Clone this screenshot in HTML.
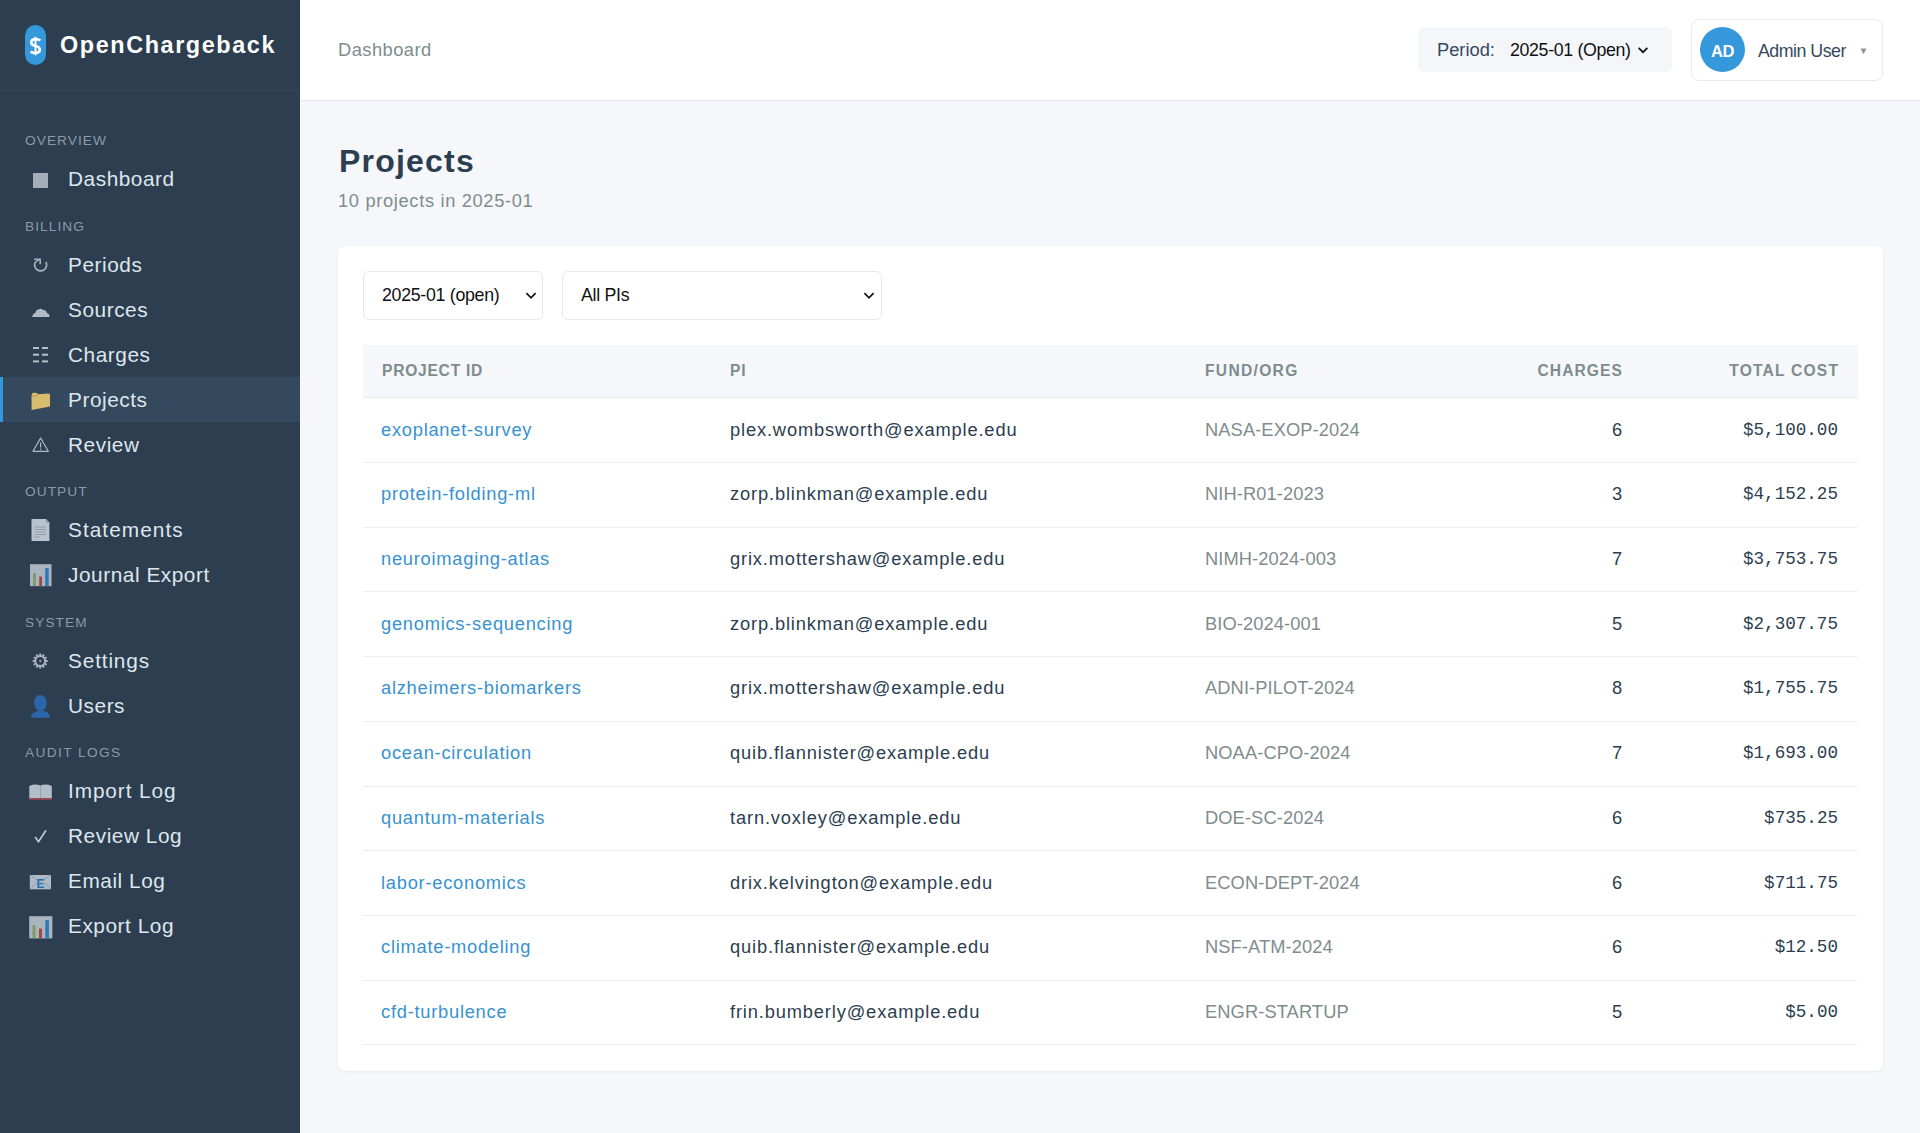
<!DOCTYPE html>
<html><head><meta charset="utf-8">
<style>
*{box-sizing:border-box;margin:0;padding:0}
html,body{width:1920px;height:1133px;overflow:hidden;background:#f5f7fa;font-family:"Liberation Sans",sans-serif}
.abs{position:absolute;white-space:nowrap}
#sb{position:absolute;left:0;top:0;width:300px;height:1133px;background:#2c3e50}
#sbh{position:absolute;left:0;top:0;width:300px;height:91px;border-bottom:1px solid #34495e}
.pill{position:absolute;left:25px;top:25px;width:21px;height:40px;border-radius:10.5px;background:#3498db}
.logo{left:60px;font-weight:bold;color:#fff;font-size:23.4px;letter-spacing:1.6px;line-height:30px;top:30px}
.sect{left:25px;font-size:13.7px;letter-spacing:1.06px;color:#8d9aa6;line-height:16px}
.nav{left:68px;font-size:20.8px;letter-spacing:0.55px;color:#dfe6ec;line-height:24px}
.band{position:absolute;left:0;width:300px;height:45px;background:#34495e;border-left:3px solid #3498db}
#hd{position:absolute;left:300px;top:0;width:1620px;height:101px;background:#fff;border-bottom:1px solid #e6e9ed}
.crumb{left:338px;font-size:18.3px;letter-spacing:0.46px;color:#7f8c8d;line-height:20px}
.pbox{position:absolute;left:1418px;top:27px;width:254px;height:45px;background:#f5f6fa;border-radius:6px}
.ubox{position:absolute;left:1691px;top:19px;width:192px;height:62px;border:1px solid #e8ebee;border-radius:8px;background:#fff}
.av{position:absolute;left:1700px;top:27px;width:45px;height:45px;border-radius:50%;background:#3498db}
.title{left:339px;font-weight:bold;font-size:32px;letter-spacing:1.2px;color:#2c3e50;line-height:36px}
.sub{left:338px;font-size:18.3px;letter-spacing:0.66px;color:#7f8c8d;line-height:20px}
#card{position:absolute;left:338px;top:246px;width:1545px;height:825px;background:#fff;border-radius:8px;box-shadow:0 1px 3px rgba(0,0,0,0.06)}
.sel{position:absolute;top:271px;height:49px;border:1px solid #e6e9ec;border-radius:6px;background:#fff}
.th{position:absolute;left:363px;top:345px;width:1495px;height:53px;background:#f5f7fa;border-bottom:1px solid #e8ecef}
.thx{font-weight:bold;font-size:15.6px;letter-spacing:0.75px;color:#7f8c8d;line-height:16px}
.row{position:absolute;left:363px;width:1495px;border-bottom:1px solid #edf0f2}
.c{font-size:18.3px;line-height:20px;letter-spacing:0.75px}
.lk{color:#3792d0}
.pi{color:#2c3e50;letter-spacing:0.85px}
.fo{color:#7f8c8d;letter-spacing:0.1px}
.ch{color:#2c3e50}
.mo{font-family:"Liberation Mono",monospace;font-size:17.6px;color:#2c3e50;line-height:20px}
.ptxt{font-size:18.3px;color:#34495e;line-height:22px}
.popen{font-size:17.8px;letter-spacing:-0.35px;color:#111;line-height:22px}
.adtxt{font-size:16.5px;font-weight:bold;color:#fff;line-height:22px;letter-spacing:-0.4px}
.admin{font-size:17.8px;letter-spacing:-0.5px;color:#34495e;line-height:22px}
.seltxt{font-size:17.8px;letter-spacing:-0.3px;color:#111;line-height:22px}
.rb{position:absolute;left:363px;width:1495px;height:1px;background:#eceff1}
</style></head><body>
<div id="sb">
  <div id="sbh"></div>
</div>
<div class="pill"></div>
<div class="abs logo">OpenChargeback</div>

<div class="band" style="top:377px"></div>
<div class="abs sect" style="top:133.05px">OVERVIEW</div>
<div class="abs sect" style="top:218.50px">BILLING</div>
<div class="abs sect" style="top:484.00px">OUTPUT</div>
<div class="abs sect" style="top:614.50px">SYSTEM</div>
<div class="abs sect" style="top:745.00px;letter-spacing:1.4px">AUDIT LOGS</div>
<div class="abs nav" style="top:167.05px">Dashboard</div>
<div class="abs nav" style="top:252.55px">Periods</div>
<div class="abs nav" style="top:297.55px">Sources</div>
<div class="abs nav" style="top:342.55px">Charges</div>
<div class="abs nav act" style="top:387.55px">Projects</div>
<div class="abs nav" style="top:432.55px">Review</div>
<div class="abs nav" style="top:518.05px;letter-spacing:1.05px">Statements</div>
<div class="abs nav" style="top:563.05px">Journal Export</div>
<div class="abs nav" style="top:648.55px;letter-spacing:0.85px">Settings</div>
<div class="abs nav" style="top:693.55px">Users</div>
<div class="abs nav" style="top:779.05px;letter-spacing:0.9px">Import Log</div>
<div class="abs nav" style="top:824.05px">Review Log</div>
<div class="abs nav" style="top:869.05px">Email Log</div>
<div class="abs nav" style="top:914.05px">Export Log</div>

<svg class="abs" style="left:0;top:0" width="60" height="1133" viewBox="0 0 60 1133">
 <!-- dashboard square -->
 <rect x="33" y="173" width="15" height="15" fill="#a4adb8"/>
 <!-- periods arrow -->
 <path d="M35.3 262.2 A6 6 0 1 0 45.9 262" fill="none" stroke="#a9b3bd" stroke-width="1.6"/>
 <path d="M35.3 262.2 L39.8 259.2 M34.2 259.2 L40.2 259.2 L40.2 264.2" fill="none" stroke="#a9b3bd" stroke-width="1.5"/>
 <!-- cloud -->
 <path d="M32 317 L49.5 317 Q49.6 313.6 46.8 313 Q46.4 309.6 43 309.9 Q41.2 308 38.6 309.4 Q35.8 309.6 35.6 312.6 Q33 313.6 32 317 Z" fill="#b1bbc5"/>
 <!-- charges -->
 <g fill="#b7c0c9">
  <rect x="33" y="347" width="6" height="2"/><rect x="42" y="347" width="6" height="2"/>
  <rect x="33" y="353.7" width="6" height="2"/><rect x="42" y="353.7" width="6" height="2"/>
  <rect x="33" y="360.4" width="6" height="2"/><rect x="42" y="360.4" width="6" height="2"/>
 </g>
 <!-- folder -->
 <path d="M31.5 396 L32 394 Q32.5 392.6 34 392.8 L37 393 L38 394.2 L48.5 393.5 Q50 393.4 50 395 L50 406.5 L31.6 410 Z" fill="#d8bd6c"/>
 <path d="M32 395.5 L38 394.8 L38 396.3 L32 397 Z" fill="#c9a353"/>
 <!-- warning -->
 <path d="M40.6 438 L48.3 451.3 L33 451.3 Z" fill="none" stroke="#b1bbc5" stroke-width="1.2" stroke-linejoin="round"/>
 <rect x="40" y="442.5" width="1.2" height="5" fill="#b1bbc5"/><rect x="40" y="448.6" width="1.2" height="1.3" fill="#b1bbc5"/>
 <!-- statements doc -->
 <path d="M31.5 519 L46 519 L49.4 522.5 L49.4 541 L31.5 541 Z" fill="#b9c3cd"/>
 <path d="M46 519 L49.4 522.5 L46 522.5 Z" fill="#6d9bc3"/>
 <g stroke="#8a96a3" stroke-width="0.8"><line x1="34.5" y1="527" x2="46" y2="527"/><line x1="34.5" y1="529.5" x2="46" y2="529.5"/><line x1="34.5" y1="532" x2="46" y2="532"/><line x1="34.5" y1="534.5" x2="46" y2="534.5"/><line x1="34.5" y1="537" x2="40" y2="537"/></g>
 <!-- journal chart -->
 <rect x="30" y="564.2" width="21.5" height="22" fill="#aab4be"/>
 <rect x="33" y="573" width="2.9" height="13" fill="#7f9a6c"/>
 <rect x="39.2" y="576.6" width="2.8" height="9.4" fill="#a4483f"/>
 <rect x="45.2" y="568" width="3.5" height="18" fill="#2f79b8"/>
 <!-- gear -->
 <g transform="translate(40.2 661)">
  <circle r="4.9" fill="none" stroke="#a9b4c0" stroke-width="2"/>
  <g fill="#a9b4c0"><rect x="-1" y="-7.5" width="2" height="3" transform="rotate(0)"/><rect x="-1" y="-7.5" width="2" height="3" transform="rotate(30)"/><rect x="-1" y="-7.5" width="2" height="3" transform="rotate(60)"/><rect x="-1" y="-7.5" width="2" height="3" transform="rotate(90)"/><rect x="-1" y="-7.5" width="2" height="3" transform="rotate(120)"/><rect x="-1" y="-7.5" width="2" height="3" transform="rotate(150)"/><rect x="-1" y="-7.5" width="2" height="3" transform="rotate(180)"/><rect x="-1" y="-7.5" width="2" height="3" transform="rotate(210)"/><rect x="-1" y="-7.5" width="2" height="3" transform="rotate(240)"/><rect x="-1" y="-7.5" width="2" height="3" transform="rotate(270)"/><rect x="-1" y="-7.5" width="2" height="3" transform="rotate(300)"/><rect x="-1" y="-7.5" width="2" height="3" transform="rotate(330)"/><circle r="1.1"/></g>
 </g>
 <!-- user -->
 <ellipse cx="40.4" cy="703" rx="6.3" ry="8" fill="#2c66a8"/>
 <path d="M31 717.7 Q31.5 711 40.4 710.5 Q49.5 711 50 717.7 Z" fill="#2c66a8"/>
 <!-- book -->
 <path d="M29.3 786 Q35 783.5 40.5 785.5 Q46 783.5 51.8 786 L51.8 798.5 L29.3 798.5 Z" fill="#b3bdc7"/>
 <rect x="29.3" y="798" width="22.5" height="1.8" fill="#9a4a55"/>
 <line x1="40.5" y1="785.5" x2="40.5" y2="798" stroke="#8f9aa6" stroke-width="0.8"/>
 <!-- check -->
 <path d="M35.5 837.5 L38.5 841.8 L45.7 830.8" fill="none" stroke="#c3ccd4" stroke-width="1.6" stroke-linecap="round" stroke-linejoin="round"/>
 <!-- envelope -->
 <rect x="29.8" y="875" width="21.2" height="14.3" fill="#aebac6"/>
 <path d="M29.8 875 L40.4 882 L51 875 M29.8 889.3 L37 882 M51 889.3 L44 882" fill="none" stroke="#7f96ad" stroke-width="0.7"/>
 <text x="40.4" y="887.6" font-family="Liberation Sans" font-weight="bold" font-size="12" fill="#2c6fb0" text-anchor="middle">E</text>
 <!-- export chart -->
 <rect x="29.2" y="916.2" width="23.2" height="22.2" fill="#aab4be"/>
 <rect x="32.5" y="925" width="3" height="13.4" fill="#7f9a6c"/>
 <rect x="39" y="928.6" width="3" height="9.8" fill="#a4483f"/>
 <rect x="45.3" y="920" width="3.6" height="18.4" fill="#2f79b8"/>
</svg>
<svg class="abs" style="left:25px;top:25px" width="21" height="40" viewBox="0 0 21 40"><path d="M15.4 15.4 Q13.4 14.1 10.6 14.1 Q6.3 14.1 6.3 17.6 Q6.3 20.2 10.5 21 Q14.8 21.8 14.8 24.6 Q14.8 28 10.4 28 Q7.4 28 5.6 26.6" fill="none" stroke="#fff" stroke-width="2.7"/><path d="M10.5 11.8 V30.2" stroke="#fff" stroke-width="2"/></svg>

<div id="hd"></div>
<div class="abs crumb" style="top:40px">Dashboard</div>
<div class="pbox"></div>
<div class="ubox"></div>
<div class="av"></div>
<div class="abs ptxt" style="left:1437px;top:39px">Period:</div>
<div class="abs popen" style="left:1510px;top:39px">2025-01 (Open)</div>
<svg class="abs" style="left:1636px;top:45px" width="14" height="12" viewBox="0 0 14 12"><path d="M2.6 2.8 L7 7.2 L11.4 2.8" fill="none" stroke="#111" stroke-width="1.7"/></svg>
<div class="abs adtxt" style="left:1700px;top:40px;width:45px;text-align:center">AD</div>
<div class="abs admin" style="left:1758px;top:40px">Admin User</div>
<svg class="abs" style="left:1859px;top:47px" width="9" height="9" viewBox="0 0 9 9"><path d="M1.5 1.5 L7.5 1.5 L4.5 7.2 Z" fill="#8a9699"/></svg>


<div class="abs title" style="top:143px">Projects</div>
<div class="abs sub" style="top:191px">10 projects in 2025-01</div>
<div id="card"></div>
<div class="sel" style="left:363px;width:180px"></div>
<div class="sel" style="left:562px;width:320px"></div>
<div class="th"></div>
<div class="abs seltxt" style="left:382px;top:284px">2025-01 (open)</div>
<svg class="abs" style="left:524px;top:290px" width="14" height="12" viewBox="0 0 14 12"><path d="M2.4 3.2 L7 7.8 L11.6 3.2" fill="none" stroke="#111" stroke-width="1.7"/></svg>
<div class="abs seltxt" style="left:581px;top:284px">All PIs</div>
<svg class="abs" style="left:862px;top:290px" width="14" height="12" viewBox="0 0 14 12"><path d="M2.4 3.2 L7 7.8 L11.6 3.2" fill="none" stroke="#111" stroke-width="1.7"/></svg>
<div class="abs thx" style="left:382px;top:362.75px">PROJECT ID</div>
<div class="abs thx" style="left:730px;top:362.75px">PI</div>
<div class="abs thx" style="left:1205px;top:362.75px;letter-spacing:1.3px">FUND/ORG</div>
<div class="abs thx" style="right:298px;top:362.75px;margin-right:-1.1px;letter-spacing:1.1px">CHARGES</div>
<div class="abs thx" style="right:82px;top:362.75px;margin-right:-1.2px;letter-spacing:1.2px">TOTAL COST</div>
<div class="rb" style="top:462.00px"></div>
<div class="abs c lk" style="left:381px;top:419.60px">exoplanet-survey</div>
<div class="abs c pi" style="left:730px;top:419.60px">plex.wombsworth@example.edu</div>
<div class="abs c fo" style="left:1205px;top:419.60px">NASA-EXOP-2024</div>
<div class="abs c ch" style="right:297px;top:419.60px">6</div>
<div class="abs mo" style="right:82px;top:419.60px">$5,100.00</div>
<div class="rb" style="top:526.72px"></div>
<div class="abs c lk" style="left:381px;top:484.32px">protein-folding-ml</div>
<div class="abs c pi" style="left:730px;top:484.32px">zorp.blinkman@example.edu</div>
<div class="abs c fo" style="left:1205px;top:484.32px">NIH-R01-2023</div>
<div class="abs c ch" style="right:297px;top:484.32px">3</div>
<div class="abs mo" style="right:82px;top:484.32px">$4,152.25</div>
<div class="rb" style="top:591.44px"></div>
<div class="abs c lk" style="left:381px;top:549.04px">neuroimaging-atlas</div>
<div class="abs c pi" style="left:730px;top:549.04px">grix.mottershaw@example.edu</div>
<div class="abs c fo" style="left:1205px;top:549.04px">NIMH-2024-003</div>
<div class="abs c ch" style="right:297px;top:549.04px">7</div>
<div class="abs mo" style="right:82px;top:549.04px">$3,753.75</div>
<div class="rb" style="top:656.16px"></div>
<div class="abs c lk" style="left:381px;top:613.76px">genomics-sequencing</div>
<div class="abs c pi" style="left:730px;top:613.76px">zorp.blinkman@example.edu</div>
<div class="abs c fo" style="left:1205px;top:613.76px">BIO-2024-001</div>
<div class="abs c ch" style="right:297px;top:613.76px">5</div>
<div class="abs mo" style="right:82px;top:613.76px">$2,307.75</div>
<div class="rb" style="top:720.88px"></div>
<div class="abs c lk" style="left:381px;top:678.48px">alzheimers-biomarkers</div>
<div class="abs c pi" style="left:730px;top:678.48px">grix.mottershaw@example.edu</div>
<div class="abs c fo" style="left:1205px;top:678.48px">ADNI-PILOT-2024</div>
<div class="abs c ch" style="right:297px;top:678.48px">8</div>
<div class="abs mo" style="right:82px;top:678.48px">$1,755.75</div>
<div class="rb" style="top:785.60px"></div>
<div class="abs c lk" style="left:381px;top:743.20px">ocean-circulation</div>
<div class="abs c pi" style="left:730px;top:743.20px">quib.flannister@example.edu</div>
<div class="abs c fo" style="left:1205px;top:743.20px">NOAA-CPO-2024</div>
<div class="abs c ch" style="right:297px;top:743.20px">7</div>
<div class="abs mo" style="right:82px;top:743.20px">$1,693.00</div>
<div class="rb" style="top:850.32px"></div>
<div class="abs c lk" style="left:381px;top:807.92px">quantum-materials</div>
<div class="abs c pi" style="left:730px;top:807.92px">tarn.voxley@example.edu</div>
<div class="abs c fo" style="left:1205px;top:807.92px">DOE-SC-2024</div>
<div class="abs c ch" style="right:297px;top:807.92px">6</div>
<div class="abs mo" style="right:82px;top:807.92px">$735.25</div>
<div class="rb" style="top:915.04px"></div>
<div class="abs c lk" style="left:381px;top:872.64px">labor-economics</div>
<div class="abs c pi" style="left:730px;top:872.64px">drix.kelvington@example.edu</div>
<div class="abs c fo" style="left:1205px;top:872.64px">ECON-DEPT-2024</div>
<div class="abs c ch" style="right:297px;top:872.64px">6</div>
<div class="abs mo" style="right:82px;top:872.64px">$711.75</div>
<div class="rb" style="top:979.76px"></div>
<div class="abs c lk" style="left:381px;top:937.36px">climate-modeling</div>
<div class="abs c pi" style="left:730px;top:937.36px">quib.flannister@example.edu</div>
<div class="abs c fo" style="left:1205px;top:937.36px">NSF-ATM-2024</div>
<div class="abs c ch" style="right:297px;top:937.36px">6</div>
<div class="abs mo" style="right:82px;top:937.36px">$12.50</div>
<div class="rb" style="top:1044.48px"></div>
<div class="abs c lk" style="left:381px;top:1002.08px">cfd-turbulence</div>
<div class="abs c pi" style="left:730px;top:1002.08px">frin.bumberly@example.edu</div>
<div class="abs c fo" style="left:1205px;top:1002.08px">ENGR-STARTUP</div>
<div class="abs c ch" style="right:297px;top:1002.08px">5</div>
<div class="abs mo" style="right:82px;top:1002.08px">$5.00</div>
</body></html>
